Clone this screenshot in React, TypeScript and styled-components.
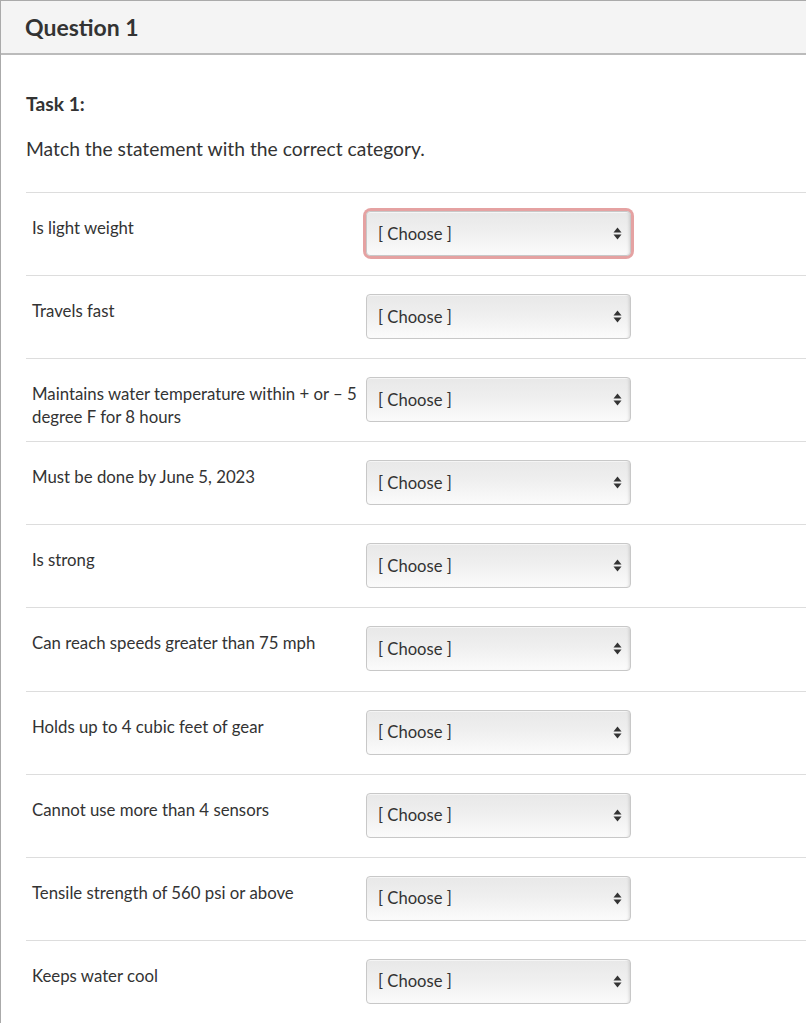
import React from "react"
import styled, { createGlobalStyle } from "styled-components"

const GlobalStyle = createGlobalStyle`
  html, body {
    margin: 0;
    padding: 0;
    background: #fff;
  }
  body {
    font-family: Lato, "Liberation Sans", sans-serif;
    color: #333;
  }
`

const statements = [
  "Is light weight",
  "Travels fast",
  "Maintains water temperature within + or – 5 degree F for 8 hours",
  "Must be done by June 5, 2023",
  "Is strong",
  "Can reach speeds greater than 75 mph",
  "Holds up to 4 cubic feet of gear",
  "Cannot use more than 4 sensors",
  "Tensile strength of 560 psi or above",
  "Keeps water cool",
]

const SortArrows = () => (
  <svg width="9" height="13" viewBox="0 0 9 13">
    <path d="M4.5 0.5 L8.5 5.5 L0.5 5.5 Z" fill="#333" />
    <path d="M0.5 7.5 L8.5 7.5 L4.5 12.5 Z" fill="#333" />
  </svg>
)

const App = () => {
  return (
    <>
      <GlobalStyle />
      <Question>
        <Header>
          <Title>Question 1</Title>
        </Header>
        <Body>
          <Task>Task 1:</Task>
          <Prompt>Match the statement with the correct category.</Prompt>
          <Answers>
            {statements.map((text, i) => (
              <Row key={text}>
                <Statement>{text}</Statement>
                <SelectWrap $focused={i === 0}>
                  <Select role="combobox">
                    <span>[ Choose ]</span>
                    <SortArrows />
                  </Select>
                </SelectWrap>
              </Row>
            ))}
          </Answers>
        </Body>
      </Question>
    </>
  )
}

export default App

const Question = styled.div`
  border-left: 1px solid #aaa;
  border-top: 1px solid #aaa;
  min-height: 1023px;
  box-sizing: border-box;
`

const Header = styled.div`
  height: 54px;
  background: #f4f4f4;
  border-bottom: 2px solid #bbb;
  display: flex;
  align-items: center;
  padding-left: 24px;
  box-sizing: border-box;
`

const Title = styled.h2`
  margin: 0;
  font-size: 23px;
  font-weight: 700;
  color: #333;
  padding-bottom: 1px;
`

const Body = styled.div`
  padding: 36px 0 0 25px;
`

const Task = styled.div`
  font-size: 19.3px;
  font-weight: 700;
  line-height: 26px;
  color: #333;
`

const Prompt = styled.p`
  margin: 19px 0 0;
  font-size: 19.3px;
  line-height: 26px;
  color: #333;
`

const Answers = styled.div`
  margin-top: 30px;
`

const Row = styled.div`
  display: flex;
  align-items: flex-start;
  border-top: 1px solid #ddd;
  height: 83.1px;
  box-sizing: border-box;
`

const Statement = styled.div`
  width: 340px;
  padding: 23px 4px 0 6px;
  box-sizing: border-box;
  font-size: 16.8px;
  line-height: 23px;
  color: #333;
`

const SelectWrap = styled.div<{ $focused?: boolean }>`
  margin-top: 18px;
  border-radius: 5px;
  box-shadow: ${(p) => (p.$focused ? "0 0 0 3px #e5a2a2" : "none")};
`

const Select = styled.div`
  width: 265px;
  height: 45px;
  box-sizing: border-box;
  display: flex;
  align-items: center;
  justify-content: space-between;
  padding: 0 8px 0 11px;
  border: 1px solid #c8c8c8;
  border-radius: 4px;
  background: linear-gradient(to bottom, #e8e8e8 0%, #efefef 45%, #fbfbfb 100%);
  box-shadow: inset -3px 0 3px -2px rgba(0, 0, 0, 0.12), inset 0 1px 0 rgba(255, 255, 255, 0.6);
  font-size: 16.6px;
  color: #333;
  cursor: pointer;
`
